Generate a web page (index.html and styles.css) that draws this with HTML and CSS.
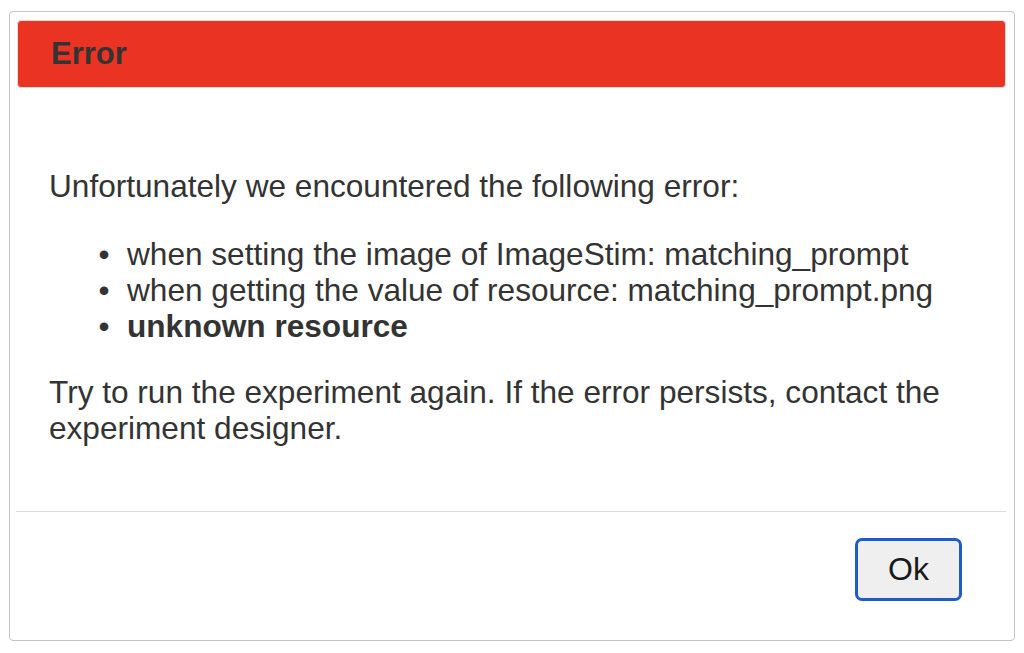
FILE: index.html
```html
<!DOCTYPE html>
<html>
<head>
<meta charset="utf-8">
<link rel="stylesheet" href="styles.css">
</head>
<body>
<div class="dialog">
  <div class="titlebar"><span class="title">Error</span></div>
  <div class="content">
    <p class="lead">Unfortunately we encountered the following error:</p>
    <ul class="errors">
      <li>when setting the image of ImageStim: matching_prompt</li>
      <li>when getting the value of resource: matching_prompt.png</li>
      <li><b>unknown resource</b></li>
    </ul>
    <p class="advice">Try to run the experiment again. If the error persists, contact the experiment designer.</p>
  </div>
  <div class="footer">
    <button class="ok">Ok</button>
  </div>
</div>
</body>
</html>
```

FILE: styles.css
```css
html, body {
  margin: 0;
  padding: 0;
  background: #ffffff;
}
body {
  font-family: "Liberation Sans", Arial, Helvetica, sans-serif;
  color: #333333;
}
.dialog {
  margin: 11px 0 0 9px;
  width: 1006px;
  height: 630px;
  box-sizing: border-box;
  border: 1px solid #c4c4c4;
  border-radius: 4px;
  display: flex;
  flex-direction: column;
}
.titlebar {
  margin: 8px 8px 0 7px;
  height: 68px;
  box-sizing: border-box;
  border: 1px solid #dcdcdc;
  border-radius: 4px;
  background: #ea3323;
  display: flex;
  align-items: center;
  padding-left: 33px;
}
.title {
  font-weight: bold;
  font-size: 31px;
  color: #333333;
}
.content {
  flex: 1;
  padding: 0 40px 0 39px;
  font-size: 31.6px;
  line-height: 36px;
}
.lead {
  margin: 80px 0 32px 0;
}
.errors {
  margin: 0 0 30px 0;
  padding-left: 78px;
}
.errors li::marker {
  content: "\2022\00a0\00a0";
  font-weight: normal;
}
.advice {
  margin: 0;
}
.footer {
  margin: 0 8px 0 6px;
  height: 129px;
  border-top: 1px solid #dcdcdc;
  display: flex;
  justify-content: flex-end;
  align-items: flex-start;
  padding-top: 26px;
  padding-right: 44px;
  box-sizing: border-box;
}
.ok {
  width: 107px;
  height: 63px;
  box-sizing: border-box;
  border: 3px solid #1f5bc9;
  border-radius: 7px;
  background: #efefef;
  font-family: "Liberation Sans", Arial, sans-serif;
  font-size: 32px;
  color: #1a1a1a;
  padding: 0;
}
```
